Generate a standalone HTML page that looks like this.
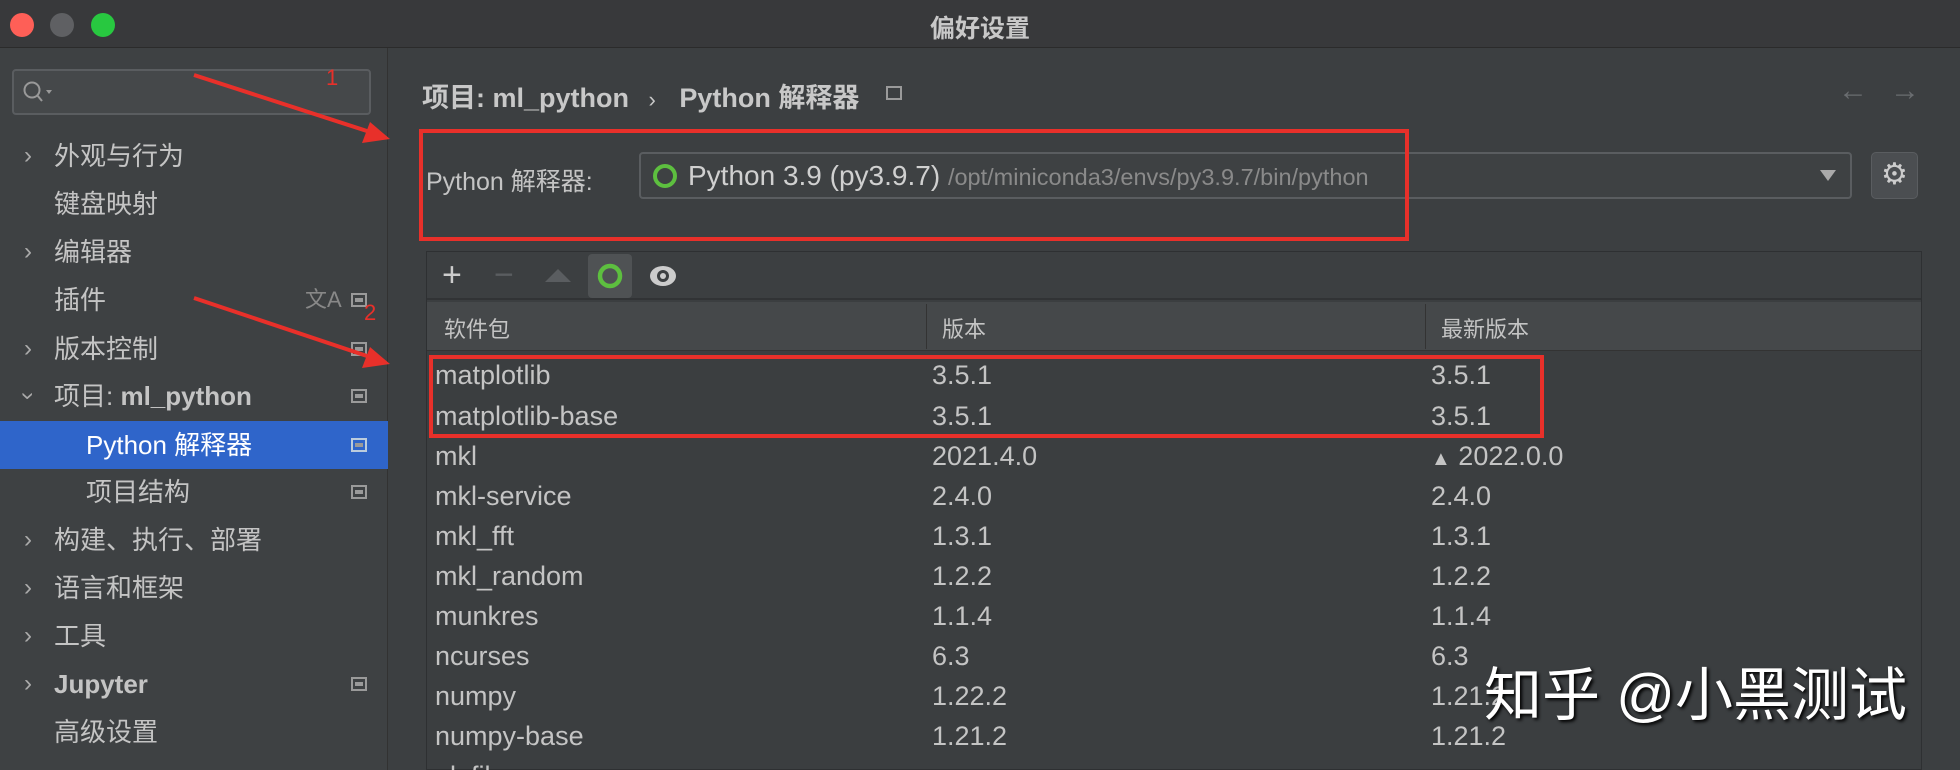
<!DOCTYPE html>
<html><head><meta charset="utf-8"><style>
*{margin:0;padding:0;box-sizing:border-box}
html{width:1960px;height:770px;overflow:hidden}
body{width:1960px;height:770px;overflow:hidden;background:#3c3f41;font-family:"Liberation Sans","Noto Sans CJK SC",sans-serif;color:#bbbbbb;position:relative}
.a{position:absolute;white-space:nowrap}
.title{left:0;top:0;width:1960px;height:48px;background:#38393b;border-bottom:1px solid #2b2b2b}
.dot{position:absolute;top:13px;width:24px;height:24px;border-radius:50%}
.side{left:0;top:48px;width:388px;height:722px;background:#3e4143;border-right:1px solid #323232}
.si{position:absolute;left:0;width:388px;height:48px;line-height:48px;font-size:26px;color:#c4c4c4}
.chev{position:absolute;left:24px;font-size:24px;color:#aaa}
.ic{position:absolute;left:351px;top:17px;width:16px;height:14px;border:2px solid #9a9a9a}
.ic:after{content:"";position:absolute;left:2px;top:3px;width:8px;height:4px;background:#9a9a9a}
.row{position:absolute;left:435px;font-size:27px;color:#c4c4c4;height:40px;line-height:40px}
.red{position:absolute;border:4px solid #e8302a}
</style></head><body>
<div class="a title"></div>
<div class="dot" style="left:10px;background:#fe5f57"></div>
<div class="dot" style="left:50px;background:#5f6063"></div>
<div class="dot" style="left:91px;background:#28c840"></div>
<div class="a" style="left:0;width:1960px;top:9px;text-align:center;font-size:25px;font-weight:bold;color:#c8c8c8">偏好设置</div>

<div class="a side"></div>
<div class="a" style="left:12px;top:69px;width:359px;height:46px;border:2px solid #5a5d60;border-radius:4px;background:#45484a"></div>
<svg class="a" style="left:22px;top:80px" width="36" height="24"><circle cx="10" cy="10" r="7.5" fill="none" stroke="#999" stroke-width="2"/><line x1="15" y1="15" x2="20" y2="21" stroke="#999" stroke-width="2"/><path d="M24 10 L30 10 L27 14Z" fill="#999"/></svg>

<div class="si" style="top:132px"><span class="chev">›</span><span style="position:absolute;left:54px">外观与行为</span></div>
<div class="si" style="top:180px"><span style="position:absolute;left:54px">键盘映射</span></div>
<div class="si" style="top:228px"><span class="chev">›</span><span style="position:absolute;left:54px">编辑器</span></div>
<div class="si" style="top:276px"><span style="position:absolute;left:54px">插件</span><span style="position:absolute;left:305px;font-size:22px;color:#888">文A</span><span class="ic"></span></div>
<div class="si" style="top:325px"><span class="chev">›</span><span style="position:absolute;left:54px">版本控制</span><span class="ic"></span></div>
<div class="si" style="top:372px"><span class="chev" style="transform:rotate(90deg)">›</span><span style="position:absolute;left:54px">项目: <b>ml_python</b></span><span class="ic"></span></div>
<div class="si" style="top:421px;background:#2f65ca;color:#fff"><span style="position:absolute;left:86px">Python 解释器</span><span class="ic" style="border-color:#bcd"></span></div>
<div class="si" style="top:468px"><span style="position:absolute;left:86px">项目结构</span><span class="ic"></span></div>
<div class="si" style="top:516px"><span class="chev">›</span><span style="position:absolute;left:54px">构建、执行、部署</span></div>
<div class="si" style="top:564px"><span class="chev">›</span><span style="position:absolute;left:54px">语言和框架</span></div>
<div class="si" style="top:612px"><span class="chev">›</span><span style="position:absolute;left:54px">工具</span></div>
<div class="si" style="top:660px"><span class="chev">›</span><span style="position:absolute;left:54px;font-weight:bold">Jupyter</span><span class="ic"></span></div>
<div class="si" style="top:708px"><span style="position:absolute;left:54px">高级设置</span></div>

<div class="a" style="left:422px;top:76px;font-size:27px;font-weight:bold;color:#c8c8c8">项目: ml_python <span style="font-weight:normal;margin:0 16px 0 12px;font-size:22px">›</span> Python 解释器</div>
<div class="a" style="left:886px;top:86px;width:16px;height:14px;border:2px solid #9a9a9a"></div>
<div class="a" style="left:1838px;top:74px;font-size:30px;color:#6a6d70">←</div>
<div class="a" style="left:1890px;top:74px;font-size:30px;color:#6a6d70">→</div>

<div class="a" style="left:426px;top:162px;font-size:25px;color:#c4c4c4">Python 解释器:</div>
<div class="a" style="left:639px;top:152px;width:1213px;height:47px;border:2px solid #5a5d60;border-radius:4px;background:#3e4143"></div>
<svg class="a" style="left:651px;top:162px" width="28" height="28"><circle cx="14" cy="14" r="10" fill="none" stroke="#5dbf3f" stroke-width="4"/></svg>
<div class="a" style="left:688px;top:160px;font-size:28px;color:#d0d0d0">Python 3.9 (py3.9.7) <span style="font-size:23.5px;color:#8a8a8a">/opt/miniconda3/envs/py3.9.7/bin/python</span></div>
<svg class="a" style="left:1820px;top:170px" width="16" height="12"><path d="M0 0H16L8 11Z" fill="#aaa"/></svg>
<div class="a" style="left:1871px;top:152px;width:47px;height:47px;border:1px solid #5a5d60;border-radius:5px;background:#4b4e51;text-align:center;line-height:44px;font-size:30px;color:#ccc">⚙</div>

<div class="a" style="left:426px;top:251px;width:1496px;height:519px;border:1px solid #2e3032;background:#3b3e40"></div>
<div class="a" style="left:427px;top:252px;width:1494px;height:48px;background:#3c3f41;border-bottom:2px solid #313335"></div>
<div class="a" style="left:442px;top:256px;font-size:34px;color:#ccc">+</div>
<div class="a" style="left:494px;top:256px;font-size:34px;color:#5a5d60">−</div>
<svg class="a" style="left:545px;top:269px" width="26" height="14"><path d="M0 13L13 0L26 13Z" fill="#5a5d60"/></svg>
<div class="a" style="left:588px;top:254px;width:44px;height:44px;background:#4f5254;border-radius:4px"></div>
<svg class="a" style="left:596px;top:262px" width="28" height="28"><circle cx="14" cy="14" r="10" fill="none" stroke="#5dbf3f" stroke-width="4.5"/></svg>
<svg class="a" style="left:648px;top:264px" width="30" height="24"><ellipse cx="15" cy="12" rx="13" ry="10" fill="#ccc"/><circle cx="15" cy="12" r="6" fill="#3c3f41"/><circle cx="15" cy="12" r="3" fill="#ccc"/></svg>
<div class="a" style="left:427px;top:302px;width:1494px;height:49px;background:#45484a;border-bottom:1px solid #333"></div>
<div class="a" style="left:926px;top:304px;width:1px;height:45px;background:#333"></div>
<div class="a" style="left:1425px;top:304px;width:1px;height:45px;background:#333"></div>
<div class="a" style="left:444px;top:312px;font-size:22px;color:#c4c4c4">软件包</div>
<div class="a" style="left:942px;top:312px;font-size:22px;color:#c4c4c4">版本</div>
<div class="a" style="left:1441px;top:312px;font-size:22px;color:#c4c4c4">最新版本</div>

<div class="row" style="top:355px">matplotlib<span class="a" style="left:497px">3.5.1</span><span class="a" style="left:996px">3.5.1</span></div>
<div class="row" style="top:396px">matplotlib-base<span class="a" style="left:497px">3.5.1</span><span class="a" style="left:996px">3.5.1</span></div>
<div class="row" style="top:436px">mkl<span class="a" style="left:497px">2021.4.0</span><span class="a" style="left:996px"><span style="font-size:20px">▲</span> 2022.0.0</span></div>
<div class="row" style="top:476px">mkl-service<span class="a" style="left:497px">2.4.0</span><span class="a" style="left:996px">2.4.0</span></div>
<div class="row" style="top:516px">mkl_fft<span class="a" style="left:497px">1.3.1</span><span class="a" style="left:996px">1.3.1</span></div>
<div class="row" style="top:556px">mkl_random<span class="a" style="left:497px">1.2.2</span><span class="a" style="left:996px">1.2.2</span></div>
<div class="row" style="top:596px">munkres<span class="a" style="left:497px">1.1.4</span><span class="a" style="left:996px">1.1.4</span></div>
<div class="row" style="top:636px">ncurses<span class="a" style="left:497px">6.3</span><span class="a" style="left:996px">6.3</span></div>
<div class="row" style="top:676px">numpy<span class="a" style="left:497px">1.22.2</span><span class="a" style="left:996px">1.21.2</span></div>
<div class="row" style="top:716px">numpy-base<span class="a" style="left:497px">1.21.2</span><span class="a" style="left:996px">1.21.2</span></div>
<div class="row" style="top:756px;height:14px;overflow:hidden">olefile<span class="a" style="left:497px">0.46</span><span class="a" style="left:996px">0.46</span></div>

<div class="red" style="left:419px;top:129px;width:990px;height:112px"></div>
<div class="red" style="left:429px;top:355px;width:1115px;height:83px"></div>
<svg class="a" style="left:0;top:0" width="420" height="400">
<line x1="194" y1="75" x2="370" y2="132" stroke="#e8302a" stroke-width="4"/><path d="M390 139L362 143L370 122Z" fill="#e8302a"/>
<line x1="194" y1="298" x2="370" y2="357" stroke="#e8302a" stroke-width="4"/><path d="M390 364L362 368L370 347Z" fill="#e8302a"/>
<text x="326" y="85" fill="#e8302a" font-size="22" font-family="Liberation Sans">1</text>
<text x="364" y="320" fill="#e8302a" font-size="22" font-family="Liberation Sans">2</text>
</svg>
<div class="a" style="left:1484px;top:648px;font-size:58px;color:#fff;text-shadow:2px 2px 3px #000">知乎 @小黑测试</div>
</body></html>
